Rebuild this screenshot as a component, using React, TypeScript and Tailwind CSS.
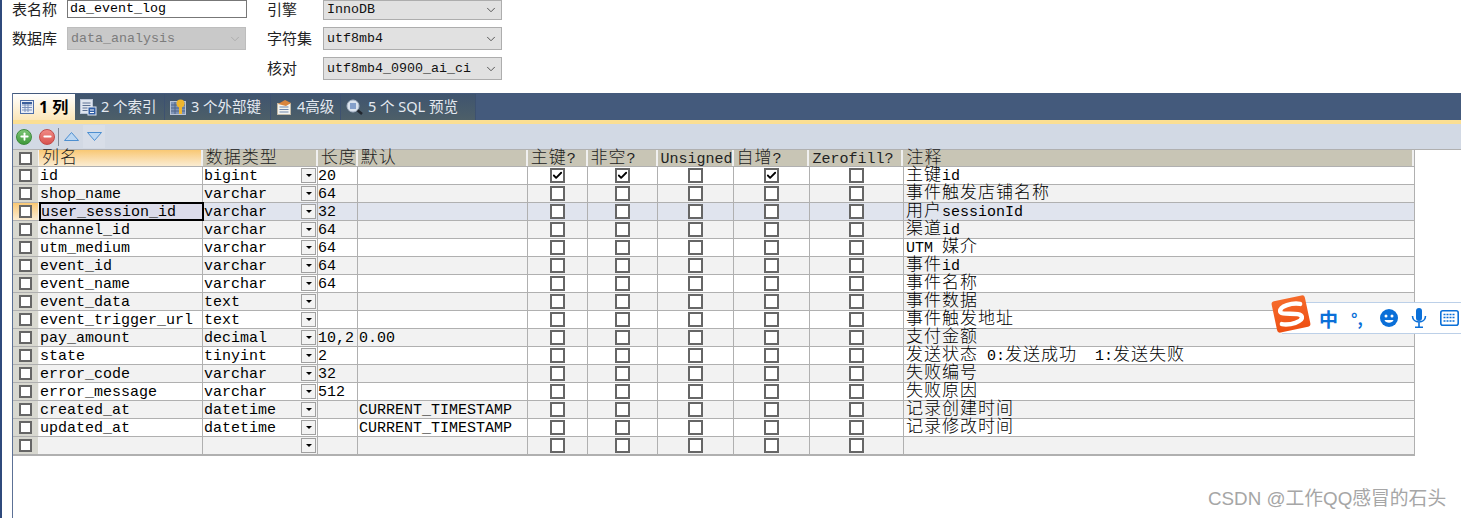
import { Check, ChevronDown, Minus, Plus } from "lucide-react";

const rows = [
  { name: "id", type: "bigint", len: "20", def: "", pk: true, nn: true, ai: true, note: "主键id" },
  { name: "shop_name", type: "varchar", len: "64", def: "", note: "事件触发店铺名称" },
  { name: "user_session_id", type: "varchar", len: "32", def: "", note: "用户sessionId" },
  { name: "channel_id", type: "varchar", len: "64", def: "", note: "渠道id" },
  { name: "utm_medium", type: "varchar", len: "64", def: "", note: "UTM 媒介" },
  { name: "event_id", type: "varchar", len: "64", def: "", note: "事件id" },
  { name: "event_name", type: "varchar", len: "64", def: "", note: "事件名称" },
  { name: "event_data", type: "text", len: "", def: "", note: "事件数据" },
  { name: "event_trigger_url", type: "text", len: "", def: "", note: "事件触发地址" },
  { name: "pay_amount", type: "decimal", len: "10,2", def: "0.00", note: "支付金额" },
  { name: "state", type: "tinyint", len: "2", def: "", note: "发送状态 0:发送成功  1:发送失败" },
  { name: "error_code", type: "varchar", len: "32", def: "", note: "失败编号" },
  { name: "error_message", type: "varchar", len: "512", def: "", note: "失败原因" },
  { name: "created_at", type: "datetime", len: "", def: "CURRENT_TIMESTAMP", note: "记录创建时间" },
  { name: "updated_at", type: "datetime", len: "", def: "CURRENT_TIMESTAMP", note: "记录修改时间" },
  { name: "", type: "", len: "", def: "", note: "" },
];

const heads = [
  { label: "列名", w: "w-[164px]", active: true },
  { label: "数据类型", w: "w-[115px]" },
  { label: "长度", w: "w-[40px]" },
  { label: "默认", w: "w-[170px]" },
  { label: "主键?", w: "w-[60px]" },
  { label: "非空?", w: "w-[70px]" },
  { label: "Unsigned", w: "w-[76px]" },
  { label: "自增?", w: "w-[76px]" },
  { label: "Zerofill?", w: "w-[94px]" },
  { label: "注释", w: "w-[511px]" },
];

// latin is 15px and cjk 18px wide in the original grid
function Mixed({ text }: { text: string }) {
  const parts = text.split(/([\u4e00-\u9fff]+)/);
  return (
    <>
      {parts.map((p, i) =>
        /[\u4e00-\u9fff]/.test(p) ? (
          <span key={i} className="text-[17px] tracking-[1px] leading-[0] font-light">
            {p}
          </span>
        ) : (
          <span key={i}>{p}</span>
        )
      )}
    </>
  );
}

function Box({ checked }: { checked?: boolean }) {
  return (
    <div className="w-[15px] h-[15px] bg-white border-2 border-[#666666] flex items-center justify-center">
      {checked && <Check size={11} strokeWidth={4} className="text-black" />}
    </div>
  );
}

function HeadBox() {
  return <div className="w-[13px] h-[13px] bg-white border-2 border-[#666666]" />;
}

function Select({ text, disabled, short }: { text: string; disabled?: boolean; short?: boolean }) {
  return (
    <div
      className={`${short ? "h-[20px]" : "h-[23px]"} w-[179px] flex items-center justify-between pl-[3px] pr-[3px] border ${
        disabled ? "bg-[#c9c9c9] border-[#bdbdbd] text-[#7c7c7c]" : "bg-[#e1e1e1] border-[#adadad] text-[#111111]"
      }`}
    >
      <span className={short ? "" : "pt-px"}>{text}</span>
      <ChevronDown size={14} strokeWidth={1.5} className={disabled ? "text-[#a8a8a8]" : "text-[#444444]"} />
    </div>
  );
}

function TabIcon({ kind }: { kind: number }) {
  if (kind === 1)
    return (
      <svg width="14" height="14" viewBox="0 0 14 14">
        <rect x="0.5" y="0.5" width="13" height="13" fill="#e8edf6" stroke="#4d6ea8" />
        <rect x="2" y="2" width="10" height="2" fill="#3c5f9c" />
        <path d="M2 5h10M2 7.5h10M2 10h10M5 4v8M8 4v8" stroke="#7d93bd" />
      </svg>
    );
  if (kind === 2)
    return (
      <svg width="17" height="17" viewBox="0 0 17 17">
        <rect x="0.5" y="0.5" width="12" height="14" fill="#dfe5ef" stroke="#b8c3d6" />
        <path d="M2.5 4h8M2.5 6.5h8M2.5 9h8M2.5 11.5h8" stroke="#5d7193" />
        <rect x="8" y="8" width="8" height="8" fill="#2f5da6" stroke="#dfe5ef" />
        <path d="M10 11h4M10 13.5h4" stroke="#ffffff" />
      </svg>
    );
  if (kind === 3)
    return (
      <svg width="17" height="17" viewBox="0 0 17 17">
        <rect x="0.5" y="2.5" width="15" height="13" fill="#7f95b8" stroke="#b8c3d6" />
        <path d="M1 6h14M1 9h14M1 12h14M5 3v12M10 3v12" stroke="#50658a" />
        <circle cx="10.5" cy="4.5" r="4" fill="#efb62f" />
        <rect x="9" y="7" width="3" height="8" fill="#efb62f" />
      </svg>
    );
  if (kind === 4)
    return (
      <svg width="17" height="17" viewBox="0 0 17 17">
        <rect x="1.5" y="4.5" width="13" height="11" fill="#f4f4f0" stroke="#c2b9a6" />
        <path d="M3.5 8h9M3.5 10.5h9M3.5 13h9" stroke="#6f87ac" />
        <path d="M2 5L9 1l6 3-5 3z" fill="#d8843c" />
      </svg>
    );
  return (
    <svg width="18" height="17" viewBox="0 0 18 17">
      <path d="M10 10l6 5" stroke="#20262e" strokeWidth="2.5" />
      <circle cx="7" cy="7" r="6" fill="#dbe3ee" stroke="#aab6c8" />
      <path d="M4 5h6M4 7h6M4 9h6" stroke="#2f5da6" strokeWidth="1.2" />
    </svg>
  );
}

const tabs = [
  { kind: 2, label: "2 个索引", w: "w-[90px]" },
  { kind: 3, label: "3 个外部键", w: "w-[106px]" },
  { kind: 4, label: "4高级", w: "w-[70px]" },
  { kind: 5, label: "5 个 SQL 预览", w: "w-[135px]" },
];

export default function App() {
  return (
    <div className="relative w-[1461px] h-[518px] overflow-hidden bg-white border-l-2 border-[#2f4a7c] font-['Liberation_Mono','Noto_Sans_CJK_SC',monospace] text-[13.33px] text-black">
      {/* form part at the top */}
      <div className="h-[93px] pl-[10px] flex">
        <div className="w-[255px] flex flex-col gap-[7px] font-['Noto_Sans_CJK_SC',sans-serif] text-[15px] text-[#222222]">
          <div className="flex items-start h-[20px]">
            <span className="w-[55px] leading-[18px]">表名称</span>
            <div className="w-[180px] h-[18px] bg-white border border-[#777777] pl-[2px] flex items-center font-['Liberation_Mono',monospace] text-[13.33px] text-black">
              da_event_log
            </div>
          </div>
          <div className="flex items-center h-[23px]">
            <span className="w-[55px]">数据库</span>
            <div className="w-[180px] font-['Liberation_Mono',monospace] text-[13.33px]">
              <Select text="data_analysis" disabled />
            </div>
          </div>
        </div>
        <div className="flex flex-col gap-[7px] text-[15px] text-[#222222]">
          {[
            ["引擎", "InnoDB"],
            ["字符集", "utf8mb4"],
            ["核对", "utf8mb4_0900_ai_ci"],
          ].map(([label, val], i) => (
            <div key={label} className={`flex ${i === 0 ? "h-[20px] items-start" : "h-[23px] items-center"}`}>
              <span className={`w-[56px] font-['Noto_Sans_CJK_SC',sans-serif] ${i === 0 ? "leading-[18px]" : ""}`}>
                {label}
              </span>
              <div className="text-[13.33px]">
                <Select text={val} short={i === 0} />
              </div>
            </div>
          ))}
        </div>
      </div>

      <div className="ml-[10px] border-l border-[#5c7196] h-[425px]">
        {/* tabs */}
        <div className="h-[27px] bg-[#445a7c] flex items-end font-['Noto_Sans','Noto_Sans_CJK_SC',sans-serif] text-[14.5px] text-[#e4e9f0]">
          <div className="w-[62px] h-[26px] bg-gradient-to-b from-white to-[#fbe6b8] flex items-center pl-[7px] gap-[5px] font-bold text-[16px] text-black">
            <TabIcon kind={1} />
            <span>1 列</span>
          </div>
          {tabs.map((t) => (
            <div
              key={t.label}
              className={`${t.w} h-[26px] bg-gradient-to-b from-[#3f546f] to-[#4d5f68] border-r border-[#3d5170] flex items-center pl-[5px] gap-[4px]`}
            >
              <TabIcon kind={t.kind} />
              <span className="whitespace-nowrap">{t.label}</span>
            </div>
          ))}
        </div>
        <div className="h-[4px] bg-[#fbdf93]" />

        {/* toolbar */}
        <div className="h-[26px] bg-[#d2d9e4] flex items-center pl-[3px] gap-[7px] border-b border-[#b0b0b0]">
          <div className="w-[16px] h-[16px] rounded-full bg-gradient-to-b from-[#7cc576] to-[#3f9a3a] border border-[#3d8a3c] flex items-center justify-center">
            <Plus size={11} strokeWidth={4} className="text-white" />
          </div>
          <div className="w-[16px] h-[16px] rounded-full bg-gradient-to-b from-[#f08a85] to-[#d9534f] border border-[#c24a48] flex items-center justify-center">
            <Minus size={11} strokeWidth={4} className="text-white" />
          </div>
          <div className="w-px h-[18px] bg-[#7e8794] -ml-[4px]" />
          <svg width="15" height="9" viewBox="0 0 15 9" className="-ml-[2px]">
            <path d="M7.5 0.5L14.5 8.5H0.5z" fill="#bcd7f2" stroke="#4d8fd0" />
          </svg>
          <div className="w-[22px] h-[23px] bg-[#d8dee8] flex items-center justify-center -ml-[3px]">
            <svg width="15" height="9" viewBox="0 0 15 9">
              <path d="M7.5 8.5L14.5 0.5H0.5z" fill="#bcd7f2" stroke="#4d8fd0" />
            </svg>
          </div>
        </div>

        {/* grid */}
        <div className="w-[1402px] border-r border-b border-[#b0b0b0]">
          <div className="flex h-[17px] text-[15px] bg-[#f0f0f0] border-b border-[#b0b0b0] leading-[20px] text-[#222222]">
            <div className="w-[26px] bg-[#d8d8d0] flex items-center justify-center border-r border-[#f4f4f4]">
              <HeadBox />
            </div>
            {heads.map((h) => (
              <div
                key={h.label}
                className={`${h.w} pl-[3px] whitespace-nowrap border-r-2 border-[#f0f0f0] ${
                  h.active ? "bg-gradient-to-b from-[#f9c873] to-[#faecd2]" : "bg-[#c8c5b5]"
                }`}
              >
                <Mixed text={h.label} />
              </div>
            ))}
          </div>
          {rows.map((r, i) => {
            const selected = i === 2;
            const bg = selected ? "bg-[#e0e4ee]" : i % 2 === 0 ? "bg-white" : "bg-[#f2f2f2]";
            const cell = "h-full border-r border-[#b0b0b0] whitespace-nowrap leading-[19px]";
            const mid = "h-full border-r border-[#b0b0b0] flex items-center justify-center";
            return (
              <div key={i} className={`flex h-[18px] text-[15px] border-b border-[#b0b0b0] ${bg}`}>
                <div
                  className={`w-[26px] h-full flex items-center justify-center border-r border-[#f4f4f4] ${
                    selected ? "bg-gradient-to-b from-[#f9c873] to-[#faecd2]" : "bg-[#d8d8d0]"
                  }`}
                >
                  <HeadBox />
                </div>
                {selected ? (
                  <div className="relative z-10 w-[165px] -mr-px -mt-px h-[19px] border-2 border-black overflow-hidden leading-[18px] bg-[#dcdcea] whitespace-nowrap">
                    {r.name}
                  </div>
                ) : (
                  <div className={`w-[164px] ${cell} pl-[1px]`}>{r.name}</div>
                )}
                <div className={`w-[115px] ${cell} pl-[1px] relative`}>
                  {r.type}
                  <div className="absolute right-[1px] top-[1px] w-[15px] h-[15px] bg-[#f3f3f3] border border-[#a0a0a0] flex items-center justify-center">
                    <div className="w-0 h-0 border-l-[3px] border-r-[3px] border-t-[3px] border-l-transparent border-r-transparent border-t-black" />
                  </div>
                </div>
                <div className={`w-[40px] ${cell}`}>{r.len}</div>
                <div className={`w-[170px] ${cell} pl-[1px]`}>{r.def}</div>
                <div className={`w-[60px] ${mid}`}>
                  <Box checked={r.pk} />
                </div>
                <div className={`w-[70px] ${mid}`}>
                  <Box checked={r.nn} />
                </div>
                <div className={`w-[76px] ${mid}`}>
                  <Box />
                </div>
                <div className={`w-[76px] ${mid}`}>
                  <Box checked={r.ai} />
                </div>
                <div className={`w-[94px] ${mid}`}>
                  <Box />
                </div>
                <div className="w-[510px] h-full pl-[2px] whitespace-pre leading-[19px]">
                  <Mixed text={r.note} />
                </div>
              </div>
            );
          })}
        </div>
      </div>

      {/* floating ime bar */}
      <div className="absolute left-[1280px] top-[302px] w-[179px] h-[32px] bg-white border-y border-[#bcd0e8] flex items-center pl-[37px] gap-[13px] text-[#0a6fd8] font-['Noto_Sans_CJK_SC',sans-serif]">
        <span className="text-[19px] font-bold leading-none">中</span>
        <span className="text-[16px] font-bold leading-none w-[16px]">°,</span>
        <svg width="18" height="18" viewBox="0 0 18 18">
          <circle cx="9" cy="9" r="9" fill="#0a6fd8" />
          <circle cx="6" cy="7" r="1.5" fill="#fff" />
          <circle cx="12" cy="7" r="1.5" fill="#fff" />
          <path d="M4.5 11c1 3.5 8 3.5 9 0z" fill="#fff" />
        </svg>
        <svg width="16" height="20" viewBox="0 0 16 20">
          <rect x="5" y="0" width="6" height="13" rx="3" fill="#0a6fd8" />
          <path d="M1.5 8c0 8 13 8 13 0M8 14.5V19M4 19.2h8" stroke="#0a6fd8" strokeWidth="1.6" fill="none" />
        </svg>
        <svg width="19" height="16" viewBox="0 0 19 16">
          <rect x="0.8" y="0.8" width="17.4" height="14.4" rx="2" fill="none" stroke="#0a6fd8" strokeWidth="1.6" />
          <path d="M3.5 4.5h12M3.5 7.5h12M3.5 11h12" stroke="#0a6fd8" strokeWidth="1.6" strokeDasharray="2 1" />
        </svg>
      </div>
      {/* sogou logo */}
      <div className="absolute left-[1272px] top-[298px] w-[34px] h-[32px] rounded-[3px] bg-gradient-to-b from-[#f56a2a] to-[#ee4f12] -rotate-12">
        <svg width="34" height="32" viewBox="0 0 34 32">
          <path
            d="M28 8C20 5 8 6 7 11c-1 5 20 4 20 10 0 5-13 6-21 3"
            fill="none"
            stroke="#ffffff"
            strokeWidth="4.5"
            strokeLinecap="round"
          />
        </svg>
      </div>

      {/* watermark */}
      <div className="absolute left-[1206px] top-[487px] font-['Liberation_Sans','Noto_Sans_CJK_SC',sans-serif] text-[18.8px] leading-[24px] text-[#a6a6a6] whitespace-nowrap">
        CSDN @工作QQ感冒的石头
      </div>
    </div>
  );
}
